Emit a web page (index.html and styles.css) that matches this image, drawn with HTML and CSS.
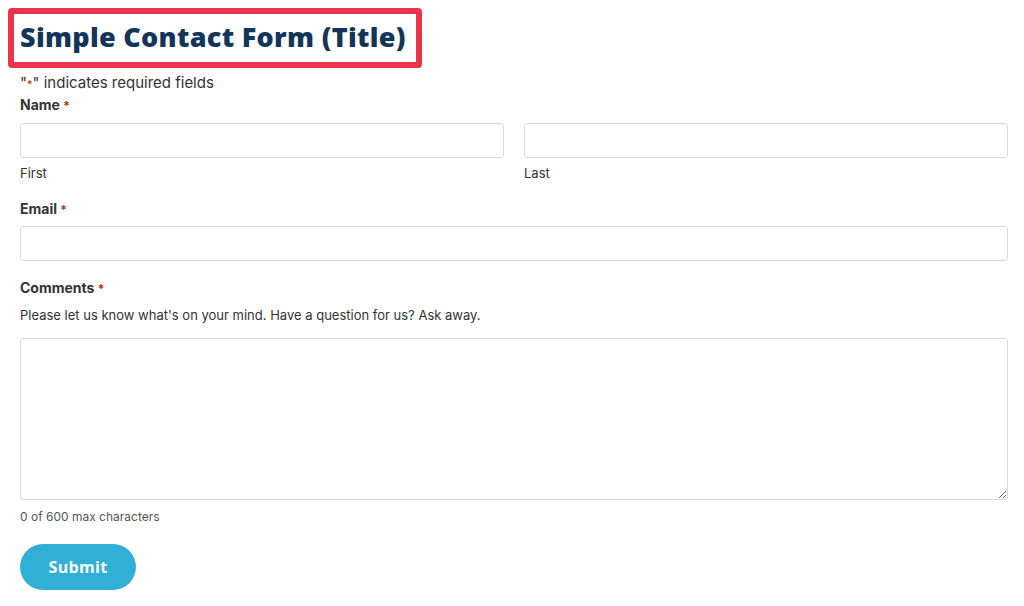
FILE: index.html
```html
<!DOCTYPE html>
<html lang="en">
<head>
<meta charset="utf-8">
<title>Simple Contact Form</title>
<link rel="stylesheet" href="styles.css">
</head>
<body>
<div class="page">
  <div class="title-box"><h1 class="title">Simple Contact Form (Title)</h1></div>
  <p class="req-note">"<span class="star">*</span>" indicates required fields</p>
  <form class="form">
    <div class="field">
      <div class="label">Name <span class="star">*</span></div>
      <div class="name-row">
        <div class="sub">
          <input class="input" type="text">
          <span class="sublabel">First</span>
        </div>
        <div class="sub">
          <input class="input" type="text">
          <span class="sublabel">Last</span>
        </div>
      </div>
    </div>
    <div class="field">
      <div class="label">Email <span class="star">*</span></div>
      <input class="input" type="text">
    </div>
    <div class="field">
      <div class="label">Comments <span class="star">*</span></div>
      <div class="desc">Please let us know what's on your mind. Have a question for us? Ask away.</div>
      <textarea class="textarea"></textarea>
      <div class="counter">0 of 600 max characters</div>
    </div>
    <button class="submit" type="button">Submit</button>
  </form>
</div>
</body>
</html>
```

FILE: styles.css
```css
* { box-sizing: border-box; }
html, body { margin: 0; padding: 0; background: #fff; }
body { font-family: Inter, "Noto Sans", sans-serif; color: #333; }
.page { padding: 8px 16px 0 8px; }
.title-box {
  display: inline-block;
  border: 6px solid #e8354b;
  border-radius: 4px;
  padding: 3px 10px 5px 6px;
}
.title {
  margin: 0;
  font-family: "Open Sans", sans-serif;
  font-weight: 800;
  font-size: 27px;
  line-height: 40px;
  color: #14355a;
  letter-spacing: 0.3px;
}
.req-note { margin: 5px 0 0 12px; font-size: 15px; line-height: 20px; color: #333; }
.star { color: #c02b0a; font-size: 12px; }
.req-note .star { font-size: 11px; }
.form { margin: 0 0 0 12px; display: flex; flex-direction: column; }
.field { display: flex; flex-direction: column; }
.label { font-size: 14px; font-weight: 700; line-height: 18px; margin-top: 2px; color: #333; }
.field + .field .label { margin-top: 0; }
.name-row { display: flex; gap: 20px; margin-top: 8px; }
.sub { flex: 1; display: flex; flex-direction: column; }
.input {
  height: 35px;
  width: 100%;
  border: 1px solid #d9d9d9;
  border-radius: 3px;
  background: #fff;
  font: inherit;
}
.field:nth-child(2) .input { margin-top: 7px; }
.sublabel { font-size: 13px; line-height: 16px; margin-top: 7px; color: #333; }
.field:nth-child(2) { margin-top: 19px; }
.field:nth-child(3) { margin-top: 18px; }
.desc { font-size: 13px; line-height: 16px; margin-top: 9px; color: #333; }
.textarea {
  margin-top: 15px;
  height: 162px;
  width: 100%;
  border: 1px solid #d9d9d9;
  border-radius: 3px;
  resize: vertical;
  font: inherit;
}
.counter { font-size: 12px; line-height: 16px; margin-top: 9px; color: #555; }
.submit {
  align-self: flex-start;
  margin-top: 19px;
  width: 116px;
  height: 46px;
  border: none;
  border-radius: 23px;
  background: #30b0d7;
  color: #fff;
  font-family: "Open Sans", sans-serif;
  font-weight: 700;
  font-size: 16px;
  letter-spacing: 0.3px;
}
```
